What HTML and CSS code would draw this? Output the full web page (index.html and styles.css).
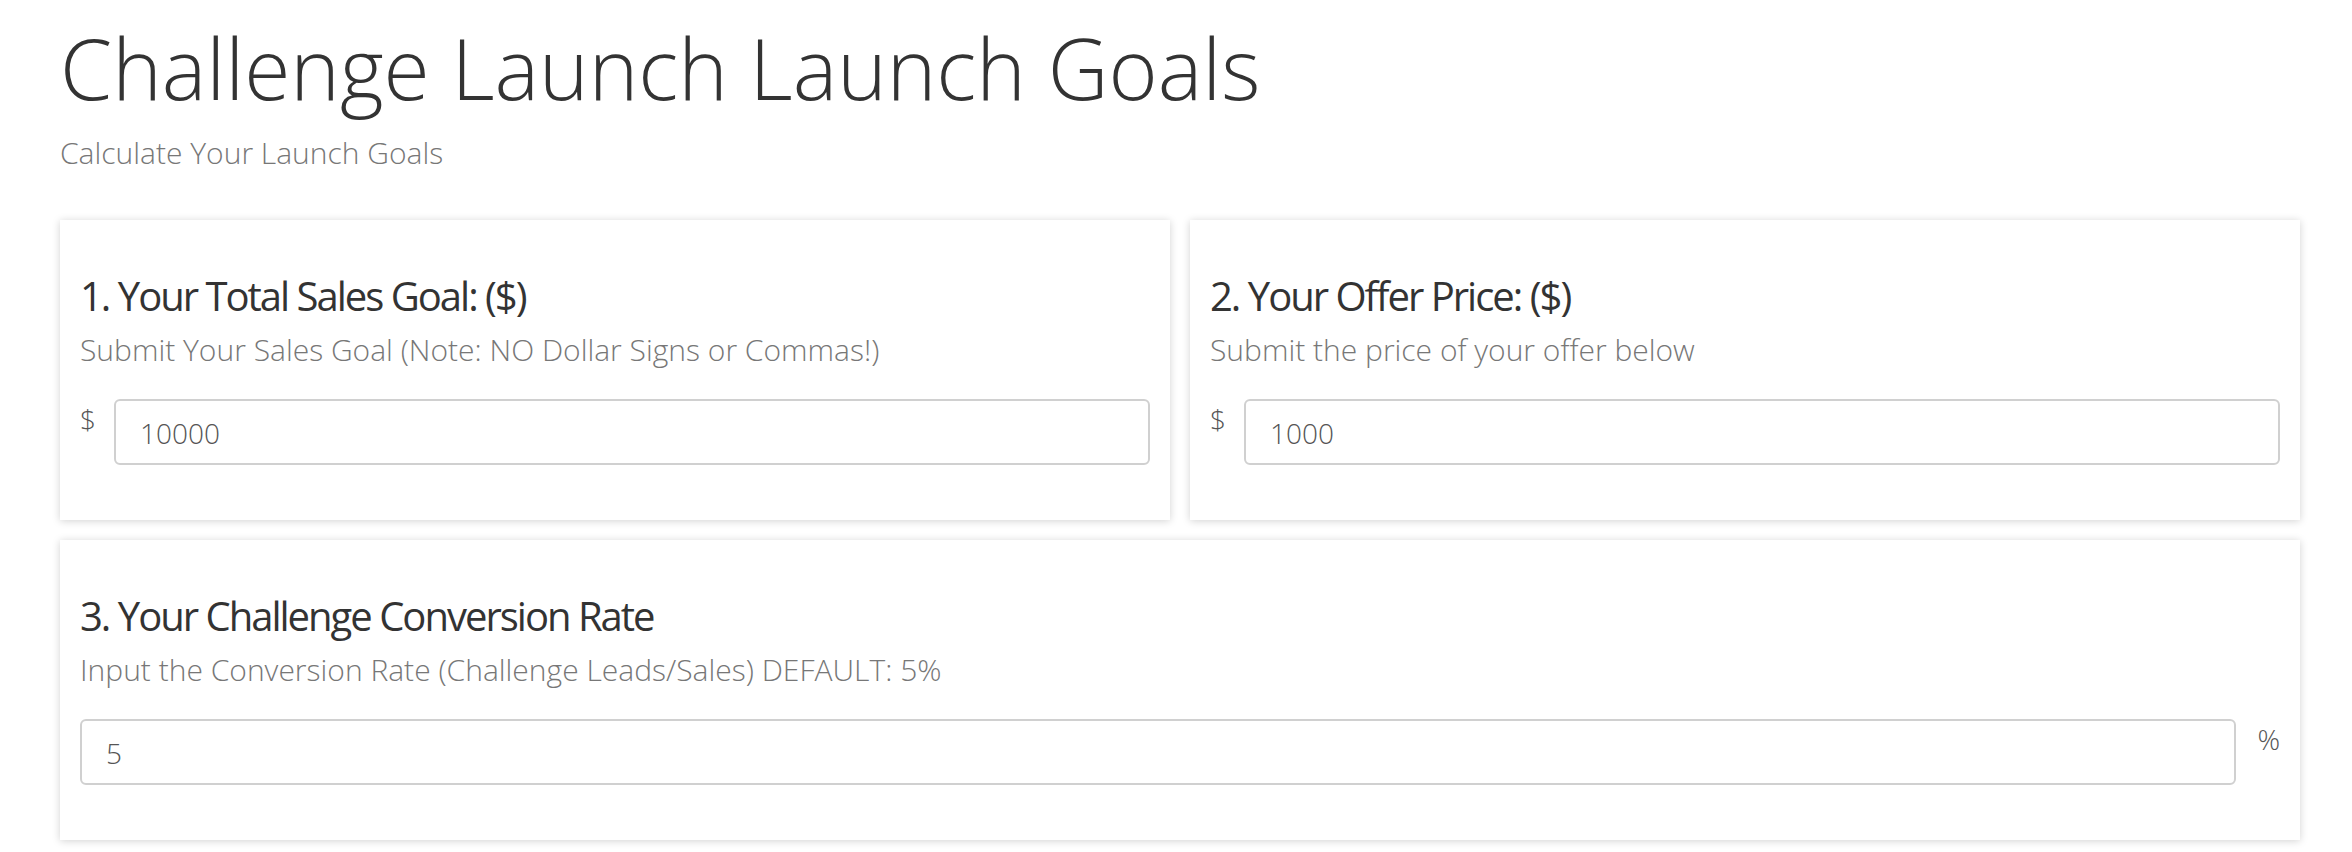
FILE: index.html
```html
<!DOCTYPE html>
<html lang="en">
<head>
<meta charset="utf-8">
<title>Challenge Launch Launch Goals</title>
<link rel="stylesheet" href="styles.css">
</head>
<body>
<div class="page">
  <header class="intro">
    <h1 class="title">Challenge Launch Launch Goals</h1>
    <p class="subtitle">Calculate Your Launch Goals</p>
  </header>
  <div class="cards">
    <section class="card">
      <h3 class="card-title">1. Your Total Sales Goal: ($)</h3>
      <p class="card-desc">Submit Your Sales Goal (Note: NO Dollar Signs or Commas!)</p>
      <div class="field">
        <span class="addon addon-left">$</span>
        <input class="field-input" type="text" value="10000">
      </div>
    </section>
    <section class="card">
      <h3 class="card-title">2. Your Offer Price: ($)</h3>
      <p class="card-desc">Submit the price of your offer below</p>
      <div class="field">
        <span class="addon addon-left">$</span>
        <input class="field-input" type="text" value="1000">
      </div>
    </section>
    <section class="card card-wide">
      <h3 class="card-title">3. Your Challenge Conversion Rate</h3>
      <p class="card-desc">Input the Conversion Rate (Challenge Leads/Sales) DEFAULT: 5%</p>
      <div class="field">
        <input class="field-input" type="text" value="5">
        <span class="addon addon-right">%</span>
      </div>
    </section>
  </div>
</div>
</body>
</html>
```
FILE: styles.css
```css
html, body {
  margin: 0;
  padding: 0;
  background: #ffffff;
}

body {
  font-family: "Open Sans", "Noto Sans", "Liberation Sans", sans-serif;
  color: #333333;
}

.page {
  padding: 18px 52px 12px 60px;
}

.title {
  margin: 0;
  font-size: 84px;
  line-height: 99px;
  font-weight: 300;
  color: #333333;
}

.subtitle {
  margin: 16px 0 0;
  font-size: 30px;
  line-height: 40px;
  font-weight: 300;
  color: #777777;
}

.cards {
  margin-top: 47px;
  display: grid;
  grid-template-columns: 1fr 1fr;
  grid-auto-rows: 300px;
  gap: 20px;
}

.card {
  box-sizing: border-box;
  height: 300px;
  padding: 0 20px;
  background: #ffffff;
  box-shadow: 0 1px 8px rgba(0, 0, 0, 0.18);
  overflow: hidden;
}

.card-wide {
  grid-column: 1 / 3;
}

.card-title {
  margin: 54px 0 0;
  font-size: 40px;
  line-height: 44px;
  font-weight: 400;
  letter-spacing: -2px;
  color: #333333;
}

.card-desc {
  margin: 12px 0 0;
  font-size: 30px;
  line-height: 40px;
  font-weight: 300;
  color: #777777;
}

.field {
  margin-top: 29px;
  display: flex;
  align-items: flex-start;
}

.addon {
  font-size: 28px;
  line-height: 40px;
  font-weight: 300;
  color: #555555;
}

.addon-left {
  margin-right: 18px;
}

.addon-right {
  margin-left: 21px;
}

.field-input {
  flex: 1;
  box-sizing: border-box;
  height: 66px;
  min-width: 0;
  margin: 0;
  padding: 2px 0 0 24px;
  border: 2px solid #d0d0d0;
  border-radius: 6px;
  font-family: "Open Sans", "Noto Sans", "Liberation Sans", sans-serif;
  font-size: 28px;
  font-weight: 300;
  color: #555555;
  background: #ffffff;
  outline: none;
}
```
